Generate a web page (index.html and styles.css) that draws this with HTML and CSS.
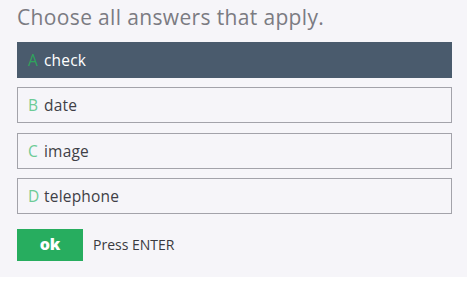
FILE: index.html
```html
<!DOCTYPE html>
<html>
<head>
<meta charset="utf-8">
<link rel="stylesheet" href="styles.css">
</head>
<body>
<div class="panel">
  <h1 class="title">Choose all answers that apply.</h1>
  <div class="options">
    <div class="option selected"><span class="key">A</span><span class="label">check</span></div>
    <div class="option"><span class="key">B</span><span class="label">date</span></div>
    <div class="option"><span class="key">C</span><span class="label">image</span></div>
    <div class="option"><span class="key">D</span><span class="label">telephone</span></div>
  </div>
  <div class="actions">
    <button class="ok">ok</button>
    <span class="hint">Press ENTER</span>
  </div>
</div>
</body>
</html>
```
FILE: styles.css
```css
html, body {
  margin: 0;
  padding: 0;
  background: #ffffff;
}
.panel {
  width: 450px;
  height: 277px;
  padding-left: 17px;
  background: #f6f5f9;
  font-family: "Open Sans", "Liberation Sans", sans-serif;
  box-sizing: content-box;
  display: flex;
  flex-direction: column;
}
.title {
  margin: 0;
  padding-top: 2px;
  height: 40px;
  font-size: 21px;
  font-weight: 400;
  line-height: 30px;
  color: #7b7b82;
  letter-spacing: 0.35px;
}
.options {
  display: flex;
  flex-direction: column;
  gap: 9.33px;
  width: 435px;
}
.option {
  height: 36px;
  box-sizing: border-box;
  border: 1px solid #a3a3aa;
  display: flex;
  align-items: center;
  padding-left: 10px;
  font-size: 15.5px;
  color: #3f3f46;
  letter-spacing: 0.2px;
}
.option.selected {
  background: #4a5b6d;
  border-color: #4a5b6d;
  color: #ffffff;
}
.key {
  color: #6dcb96;
  width: 16px;
  font-size: 15.5px;
}
.option.selected .key {
  color: #2fa35c;
}
.actions {
  display: flex;
  align-items: center;
  margin-top: 15px;
  gap: 10px;
}
.ok {
  width: 66px;
  height: 32px;
  border: none;
  background: #27ad5f;
  color: #ffffff;
  font-family: "Open Sans", "Liberation Sans", sans-serif;
  font-weight: 800;
  font-size: 16px;
  padding: 0;
  padding-bottom: 2px;
}
.hint {
  font-size: 14px;
  color: #3a3a40;
}
```
